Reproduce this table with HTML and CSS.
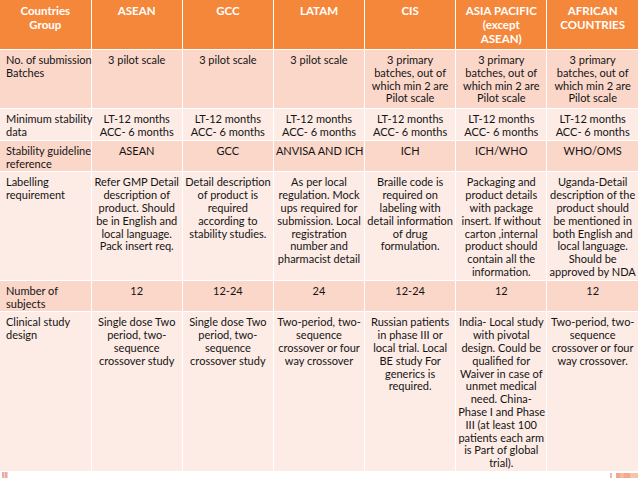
FILE: index.html
```html
<!DOCTYPE html>
<html>
<head>
<meta charset="utf-8">
<link rel="stylesheet" href="styles.css">
</head>
<body>
<div class="slide">
<table class="grid">
<colgroup>
<col class="c"><col class="c"><col class="c"><col class="c"><col class="c"><col class="c"><col class="c">
</colgroup>
<thead>
<tr class="head">
<th>Countries<br>Group</th>
<th>ASEAN</th>
<th>GCC</th>
<th>LATAM</th>
<th>CIS</th>
<th>ASIA PACIFIC<br>(except<br>ASEAN)</th>
<th>AFRICAN<br>COUNTRIES</th>
</tr>
</thead>
<tbody>
<tr class="dark first">
<td class="label">No. of submission<br>Batches</td>
<td>3 pilot scale</td>
<td>3 pilot scale</td>
<td>3 pilot scale</td>
<td>3 primary<br>batches, out of<br>which min 2 are<br>Pilot scale</td>
<td>3 primary<br>batches, out of<br>which min 2 are<br>Pilot scale</td>
<td>3 primary<br>batches, out of<br>which min 2 are<br>Pilot scale</td>
</tr>
<tr class="light">
<td class="label">Minimum stability<br>data</td>
<td>LT-12 months<br>ACC- 6 months</td>
<td>LT-12 months<br>ACC- 6 months</td>
<td>LT-12 months<br>ACC- 6 months</td>
<td>LT-12 months<br>ACC- 6 months</td>
<td>LT-12 months<br>ACC- 6 months</td>
<td>LT-12 months<br>ACC- 6 months</td>
</tr>
<tr class="dark">
<td class="label">Stability guideline<br>reference</td>
<td>ASEAN</td>
<td>GCC</td>
<td>ANVISA AND ICH</td>
<td>ICH</td>
<td>ICH/WHO</td>
<td>WHO/OMS</td>
</tr>
<tr class="light">
<td class="label">Labelling<br>requirement</td>
<td>Refer GMP Detail<br>description of<br>product. Should<br>be in English and<br>local language.<br>Pack insert req.</td>
<td>Detail description<br>of product is<br>required<br>according to<br>stability studies.</td>
<td>As per local<br>regulation. Mock<br>ups required for<br>submission. Local<br>registration<br>number and<br>pharmacist detail</td>
<td>Braille code is<br>required on<br>labeling with<br>detail information<br>of drug<br>formulation.</td>
<td>Packaging and<br>product details<br>with package<br>insert. If without<br>carton ,internal<br>product should<br>contain all the<br>information.</td>
<td>Uganda-Detail<br>description of the<br>product should<br>be mentioned in<br>both English and<br>local language.<br>Should be<br>approved by NDA</td>
</tr>
<tr class="dark">
<td class="label">Number of<br>subjects</td>
<td>12</td>
<td>12-24</td>
<td>24</td>
<td>12-24</td>
<td>12</td>
<td>12</td>
</tr>
<tr class="light">
<td class="label">Clinical study<br>design</td>
<td>Single dose Two<br>period, two-<br>sequence<br>crossover study</td>
<td>Single dose Two<br>period, two-<br>sequence<br>crossover study</td>
<td>Two-period, two-<br>sequence<br>crossover or four<br>way crossover</td>
<td>Russian patients<br>in phase III or<br>local trial. Local<br>BE study For<br>generics is<br>required.</td>
<td>India- Local study<br>with pivotal<br>design. Could be<br>qualified for<br>Waiver in case of<br>unmet medical<br>need. China-<br>Phase I and Phase<br>III (at least 100<br>patients each arm<br>is Part of global<br>trial).</td>
<td>Two-period, two-<br>sequence<br>crossover or four<br>way crossover.</td>
</tr>
</tbody>
</table>
<div class="footer">
<span class="mark-left"></span>
<span class="mark-right"></span>
</div>
</div>
</body>
</html>
```
FILE: styles.css
```css
html, body {
  margin: 0;
  padding: 0;
  background: #ffffff;
}
.slide {
  width: 638px;
  height: 478px;
  display: flex;
  flex-direction: column;
  overflow: hidden;
  font-family: Lato, "Liberation Sans", sans-serif;
}
.grid {
  width: 638px;
  table-layout: fixed;
  border-collapse: collapse;
}
.grid .c {
  width: 91px;
}
.grid th,
.grid td {
  border: 1.5px solid #ffffff;
  vertical-align: top;
  text-align: center;
  white-space: nowrap;
}
.grid tr:first-child th { border-top: 0; }
.grid th:first-child, .grid td:first-child { border-left: 0; }
.grid th:last-child, .grid td:last-child { border-right: 0; }
.head th {
  background: #f5873b;
  color: #ffffff;
  font-weight: 700;
  font-size: 11.5px;
  line-height: 14px;
  padding: 4px 2px 3px;
  height: 42px;
}
.grid td {
  font-size: 11px;
  line-height: 12.8px;
  color: #141414;
  padding: 4px 2px 1px;
}
.grid .first td {
  padding-bottom: 3px;
}
.grid td.label {
  text-align: left;
  padding-left: 6px;
}
.dark td { background: #fbd7ca; }
.light td { background: #fdebe5; }
.footer {
  flex: 1;
  display: flex;
  justify-content: space-between;
  align-items: flex-end;
  padding: 0 0 0 2px;
}
.mark-left {
  width: 6px;
  height: 6px;
  background: repeating-linear-gradient(90deg, #eea7a3 0 2px, #f7d2cd 2px 3px);
}
.mark-right {
  width: 28px;
  height: 5px;
  background: linear-gradient(90deg, #f1b6ac 0 2px, #ffffff 2px 6px, #f3a68f 6px 10px, #f6b89f 10px 14px, #f4a88c 14px 20px, #f7c3ad 20px 28px);
}
```
